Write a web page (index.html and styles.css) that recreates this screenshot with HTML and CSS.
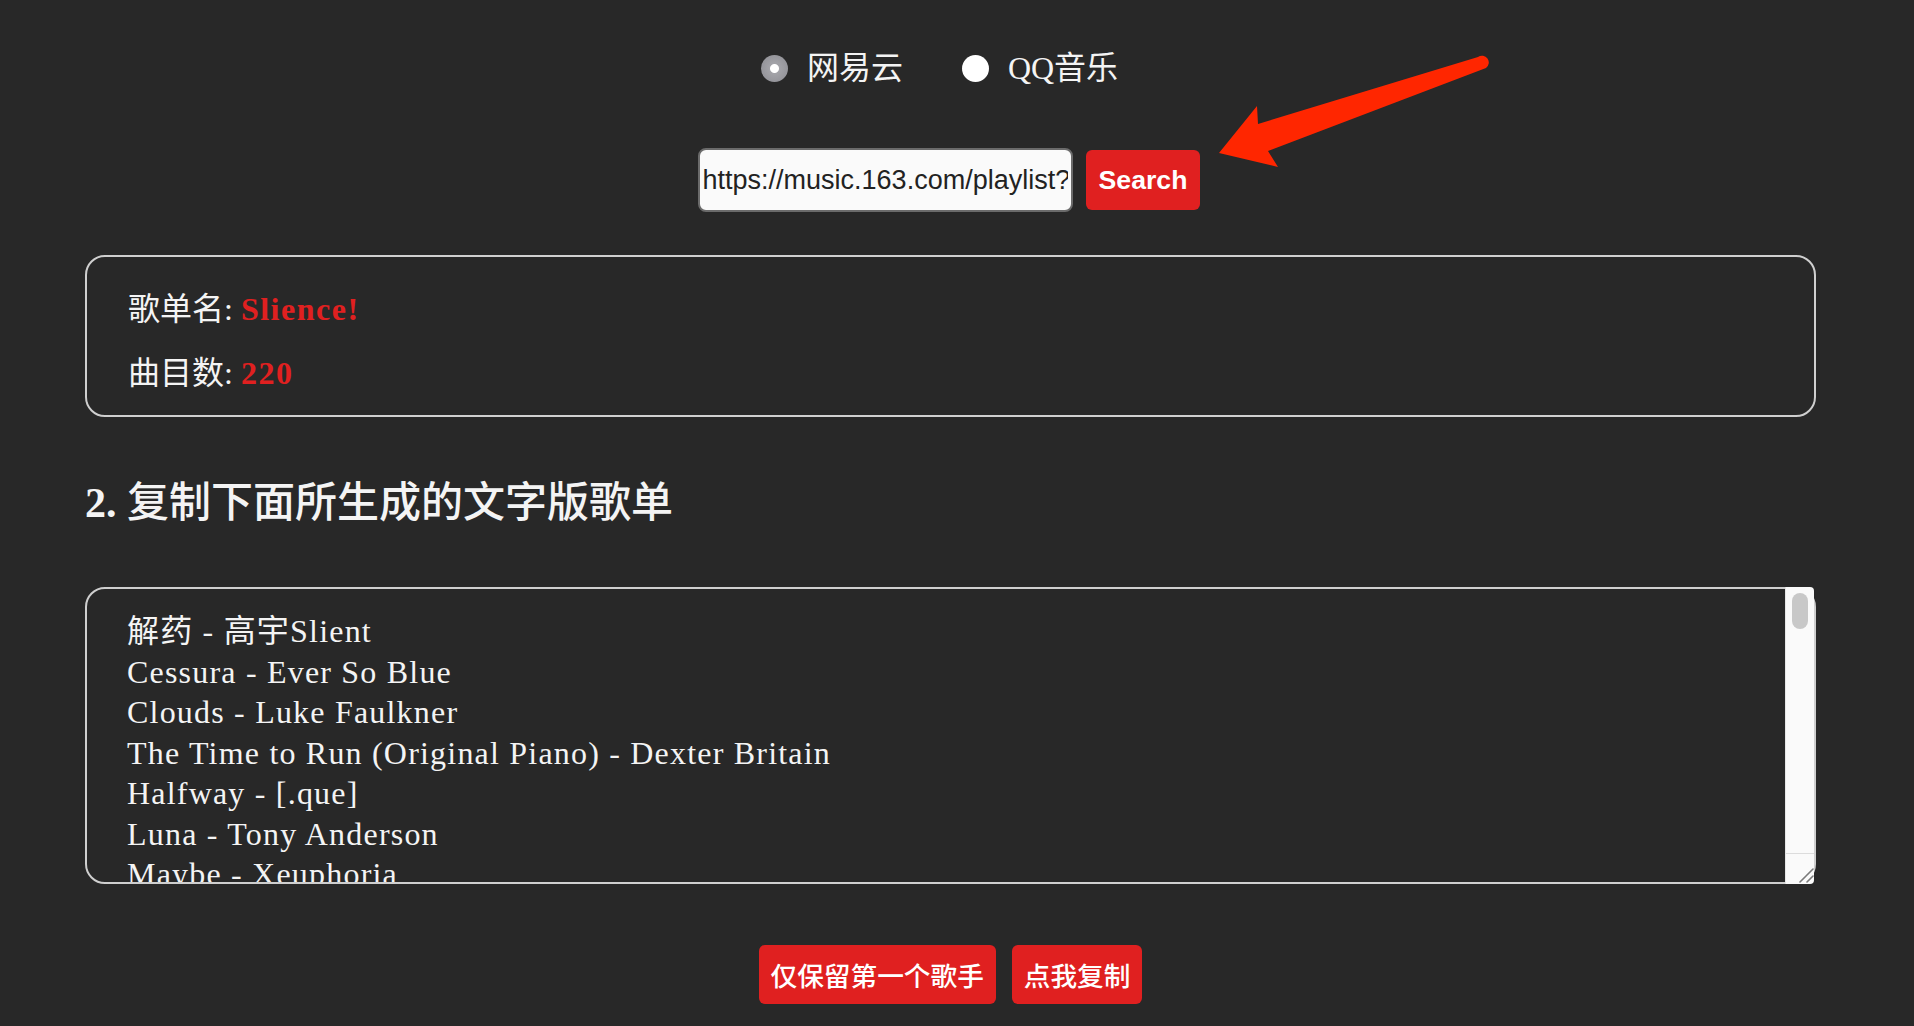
FILE: index.html
```html
<!DOCTYPE html>
<html lang="zh-CN">
<head>
<meta charset="utf-8">
<title>歌单转换</title>
<link rel="stylesheet" href="styles.css">
</head>
<body>
<main class="page">
  <div class="sources">
    <label class="source"><input class="radio" type="radio" name="src" checked><span>网易云</span></label>
    <label class="source"><input class="radio" type="radio" name="src"><span>QQ音乐</span></label>
  </div>
  <div class="search">
    <input class="url" type="text" value="https://music.163.com/playlist?id=2829883282">
    <button class="search-btn">Search</button>
  </div>
  <section class="info">
    <div class="info-row">歌单名: <span class="hl">Slience!</span></div>
    <div class="info-row">曲目数: <span class="hl">220</span></div>
  </section>
  <h2 class="title"><span class="num">2.</span> 复制下面所生成的文字版歌单</h2>
  <div class="list-box">
    <textarea class="list" readonly>解药 - 高宇Slient
Cessura - Ever So Blue
Clouds - Luke Faulkner
The Time to Run (Original Piano) - Dexter Britain
Halfway - [.que]
Luna - Tony Anderson
Maybe - Xeuphoria
River Flows in You - Yiruma
Kiss the Rain - Yiruma
Nuvole Bianche - Ludovico Einaudi
Experience - Ludovico Einaudi
Comptine d'un autre été - Yann Tiersen
Mariage d'amour - Paul de Senneville
Summer - 久石譲
One Summer's Day - 久石譲
Always With Me - 木村弓
Merry Christmas Mr. Lawrence - 坂本龍一
Canon in D - Johann Pachelbel
Gymnopédie No.1 - Erik Satie
Clair de Lune - Claude Debussy</textarea>
    <div class="scrollbar" aria-hidden="true">
      <div class="track"><div class="thumb"></div></div>
      <div class="resizer">
        <svg width="28" height="30" viewBox="0 0 28 30">
          <path d="M14 28 L27 15 M21 28 L27 22" stroke="#7a7a7a" stroke-width="1.6" stroke-linecap="round" fill="none"/>
        </svg>
      </div>
    </div>
  </div>
  <div class="actions">
    <button class="action">仅保留第一个歌手</button>
    <button class="action">点我复制</button>
  </div>
</main>
<svg class="arrow" width="1914" height="200" viewBox="0 0 1914 200" aria-hidden="true">
  <path d="M1219 153 L1257 106 L1258 124 L1478 57 A6.5 6.5 0 0 1 1486 68 L1268 151 L1278 167 Z" fill="#ff2600"/>
</svg>
</body>
</html>
```
FILE: styles.css
```css
html, body {
  margin: 0;
  background: #282828;
}

body {
  color: #f4f4f4;
  font-family: "Liberation Serif", "Noto Sans CJK SC", serif;
  position: relative;
}

.page {
  width: 1731px;
  margin-left: 85px;
  padding-top: 48px;
}

.sources {
  display: flex;
  justify-content: center;
  align-items: center;
  height: 40px;
  padding-right: 22px;
  font-size: 32px;
  line-height: 40px;
}

.source {
  display: flex;
  align-items: center;
  gap: 19px;
}

.source + .source {
  margin-left: 59px;
}

.radio {
  appearance: none;
  -webkit-appearance: none;
  margin: 0;
  width: 27px;
  height: 27px;
  border-radius: 50%;
  background: #ffffff;
}

.radio:checked {
  background: radial-gradient(circle, #ffffff 0 4px, #a3a3a8 5px, #8c8c92 100%);
}

.search {
  display: flex;
  justify-content: center;
  align-items: center;
  gap: 13px;
  margin-top: 60px;
  padding-right: 3px;
}

.url {
  box-sizing: border-box;
  width: 375px;
  height: 64px;
  margin: 0;
  padding: 0 3px;
  border: 2px solid #6b6b6b;
  border-radius: 8px;
  background: #fafafa;
  color: #222222;
  font: 27px "Liberation Sans", sans-serif;
  outline: none;
}

.search-btn {
  height: 60px;
  margin: 0;
  padding: 0 13px;
  border: 0;
  border-radius: 6px;
  background: #e02020;
  color: #ffffff;
  font: 700 26.67px "Liberation Sans", sans-serif;
}

.info {
  margin-top: 43px;
  border: 2px solid #cfcfcf;
  border-radius: 20px;
  padding: 32px 41px 22px;
  display: flex;
  flex-direction: column;
  gap: 24px;
  font-size: 32px;
  line-height: 40px;
}

.hl {
  color: #e02020;
  font-weight: 700;
  letter-spacing: 1.5px;
}

.title {
  margin: 58px 0 0;
  font-size: 42px;
  line-height: 56px;
  font-weight: 500;
}

.num {
  font-weight: 700;
}

.list-box {
  display: flex;
  box-sizing: border-box;
  height: 297px;
  margin-top: 56px;
  border: 2px solid #cfcfcf;
  border-radius: 20px;
}

.list {
  flex: 1;
  box-sizing: border-box;
  height: 100%;
  min-width: 0;
  margin: 0;
  padding: 22px 40px;
  border: 0;
  background: transparent;
  color: #f4f4f4;
  font: 32px/40.5px "Liberation Serif", "Noto Sans CJK SC", serif;
  letter-spacing: 1.2px;
  outline: none;
  resize: none;
  overflow: hidden;
}

.scrollbar {
  width: 28px;
  margin: -2px 0;
  display: flex;
  flex-direction: column;
  background: #fafafa;
  border-left: 1px solid #e6e6e6;
  border-radius: 0 4px 4px 0;
}

.track {
  flex: 1;
  padding-top: 6px;
}

.thumb {
  width: 16px;
  height: 36px;
  margin-left: 6px;
  border-radius: 8px;
  background: #c8c8c8;
}

.resizer {
  height: 30px;
  border-top: 1px solid #dcdcdc;
}

.resizer svg {
  display: block;
}

.actions {
  display: flex;
  justify-content: center;
  gap: 16px;
  margin-top: 61px;
}

.action {
  height: 59px;
  margin: 0;
  padding: 0 12px;
  border: 0;
  border-radius: 6px;
  background: #e02020;
  color: #ffffff;
  font: 500 26.67px "Noto Sans CJK SC", sans-serif;
}

.arrow {
  position: absolute;
  top: 0;
  left: 0;
  pointer-events: none;
}
```
